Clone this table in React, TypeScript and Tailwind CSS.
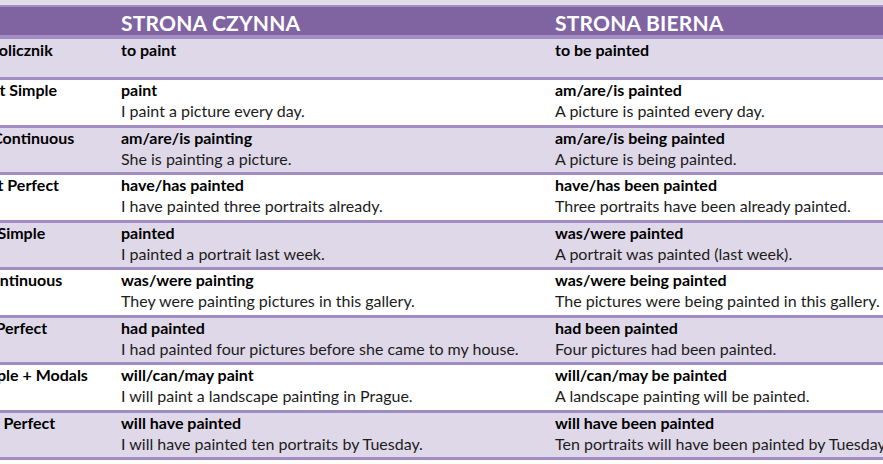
import React from 'react';

type Row = { tense: string; active: [string, string]; passive: [string, string]; shaded: boolean };

const rows: Row[] = [
  { tense: 'Present Simple', active: ['paint', 'I paint a picture every day.'], passive: ['am/are/is painted', 'A picture is painted every day.'], shaded: false },
  { tense: 'Present Continuous', active: ['am/are/is painting', 'She is painting a picture.'], passive: ['am/are/is being painted', 'A picture is being painted.'], shaded: true },
  { tense: 'Present Perfect', active: ['have/has painted', 'I have painted three portraits already.'], passive: ['have/has been painted', 'Three portraits have been already painted.'], shaded: false },
  { tense: 'Past Simple', active: ['painted', 'I painted a portrait last week.'], passive: ['was/were painted', 'A portrait was painted (last week).'], shaded: true },
  { tense: 'Past Continuous', active: ['was/were painting', 'They were painting pictures in this gallery.'], passive: ['was/were being painted', 'The pictures were being painted in this gallery.'], shaded: false },
  { tense: 'Past Perfect', active: ['had painted', 'I had painted four pictures before she came to my house.'], passive: ['had been painted', 'Four pictures had been painted.'], shaded: true },
  { tense: 'Future Simple + Modals', active: ['will/can/may paint', 'I will paint a landscape painting in Prague.'], passive: ['will/can/may be painted', 'A landscape painting will be painted.'], shaded: false },
  { tense: 'Future Perfect', active: ['will have painted', 'I will have painted ten portraits by Tuesday.'], passive: ['will have been painted', 'Ten portraits will have been painted by Tuesday.'], shaded: true },
];

const Cell = ({ lines }: { lines: [string, string] }) => (
  <div className="pl-[9px] -mt-[1px] whitespace-nowrap">
    <div className="font-bold text-black leading-[21px]">{lines[0]}</div>
    <div className="text-[#1c1c1c] leading-[21px]">{lines[1]}</div>
  </div>
);

export default function App() {
  return (
    <div className="w-[883px] h-[464px] overflow-hidden bg-white text-[16px]" style={{ fontFamily: 'Lato, "Noto Sans", sans-serif' }}>
      <div className="-ml-[88px] w-[1100px]">
        <div className="h-[5px] bg-[#e2dcea]" />
        <div className="border-t-[2px] border-[#a28dc2] h-[32px] bg-[#8064a2] grid grid-cols-[200px_434px_1fr] items-center">
          <div />
          <div className="pl-[9px] text-white font-bold text-[21px] tracking-[0.2px]">STRONA CZYNNA</div>
          <div className="pl-[9px] text-white font-bold text-[21px] tracking-[0.2px]">STRONA BIERNA</div>
        </div>
        <div className="border-t-[4px] border-[#a28dc2] bg-[#dfd8e8] grid grid-cols-[200px_434px_1fr] -mt-[2px] h-[42px]">
          <div className="text-center pr-[16px] font-bold text-black leading-[21px] whitespace-nowrap">Bezokolicznik</div>
          <div className="pl-[9px] font-bold text-black leading-[21px]">to paint</div>
          <div className="pl-[9px] font-bold text-black leading-[21px]">to be painted</div>
        </div>
        {rows.map((r) => (
          <div
            key={r.tense}
            className={`border-t-[3px] border-[#a28dc2] h-[47.5px] grid grid-cols-[200px_434px_1fr] ${r.shaded ? 'bg-[#dfd8e8]' : 'bg-white'}`}
          >
            <div className="text-center pr-[16px] font-bold text-black leading-[21px] -mt-[1px] whitespace-nowrap">{r.tense}</div>
            <Cell lines={r.active} />
            <Cell lines={r.passive} />
          </div>
        ))}
        <div className="border-t-[3px] border-[#a28dc2]" />
      </div>
    </div>
  );
}
